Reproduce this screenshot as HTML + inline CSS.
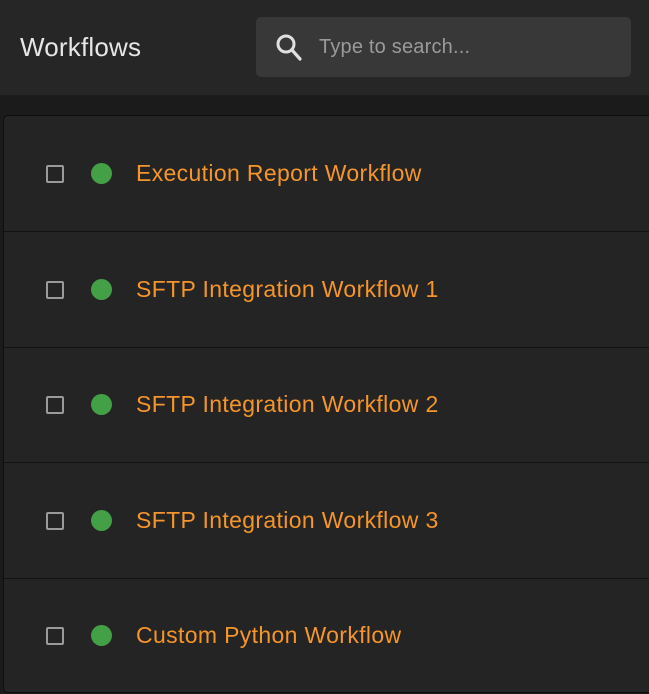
<!DOCTYPE html>
<html><head><style>
body{margin:0;width:649px;height:694px;background:#1b1b1b;font-family:"Liberation Sans",Roboto,sans-serif;overflow:hidden;position:relative}
.hdr{position:absolute;left:0;top:0;width:649px;height:95px;background:#262626}
.title{position:absolute;left:20px;top:32px;font-size:26px;color:#e6e6e6;letter-spacing:0.2px}
.search{position:absolute;left:256px;top:17px;width:375px;height:60px;background:#383838;border-radius:5px}
.search svg{position:absolute;left:18px;top:16px}
.search span{position:absolute;left:63px;top:19px;font-size:20px;color:#9a9a9a;letter-spacing:0.2px}
.card{position:absolute;left:3px;top:115px;width:660px;height:578px;background:#242424;border:1px solid #0e0e0e;border-radius:5px;box-sizing:border-box}
.row{position:absolute;left:0;width:100%;height:115px;border-bottom:1px solid #111}
.cb{position:absolute;left:42px;top:49px;width:14px;height:14px;border:2px solid #9a9a9a;border-radius:2px}
.dot{position:absolute;left:87px;top:47px;width:21px;height:21px;border-radius:50%;background:#43a047}
.nm{position:absolute;left:132px;top:44px;font-size:23px;color:#f5952b;letter-spacing:0.35px}
</style></head><body>
<div class="hdr"><div class="title">Workflows</div>
<div class="search"><svg width="30" height="30" viewBox="0 0 28 30"><circle cx="11" cy="11" r="8" fill="none" stroke="#e0e0e0" stroke-width="3"/><path d="M17 17L25 26" stroke="#e0e0e0" stroke-width="3.2" stroke-linecap="round"/></svg><span>Type to search...</span></div></div>
<div class="card">
<div class="row" style="top:0"><div class="cb"></div><div class="dot"></div><div class="nm">Execution Report Workflow</div></div>
<div class="row" style="top:116px"><div class="cb"></div><div class="dot"></div><div class="nm">SFTP Integration Workflow 1</div></div>
<div class="row" style="top:231px"><div class="cb"></div><div class="dot"></div><div class="nm">SFTP Integration Workflow 2</div></div>
<div class="row" style="top:347px"><div class="cb"></div><div class="dot"></div><div class="nm">SFTP Integration Workflow 3</div></div>
<div class="row" style="top:462px;border-bottom:none"><div class="cb"></div><div class="dot"></div><div class="nm">Custom Python Workflow</div></div>
</div>
</body></html>
